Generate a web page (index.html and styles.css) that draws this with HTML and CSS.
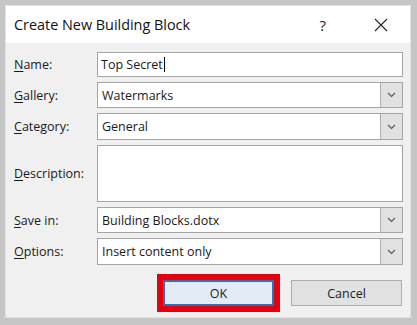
FILE: index.html
```html
<!DOCTYPE html>
<html lang="en">
<head>
    <meta charset="UTF-8">
    <title>Create New Building Block</title>
    <link rel="stylesheet" href="styles.css">
</head>
<body>
    <div class="dialog">
        <!-- Title bar -->
        <div class="titlebar">
            <span class="title">Create New Building Block</span>
            <span class="help">?</span>
            <svg class="close" width="14" height="14" viewBox="0 0 14 14">
                <path d="M1 1 L13 13 M13 1 L1 13" stroke="#222" stroke-width="1.1" fill="none"/>
            </svg>
        </div>

        <!-- Fields -->
        <div class="form">
            <label><u>N</u>ame:</label>
            <div class="field text">Top Secret<span class="caret"></span></div>

            <label><u>G</u>allery:</label>
            <div class="field select"><span class="value">Watermarks</span><span class="drop"><svg width="9" height="6" viewBox="0 0 9 6"><path d="M1 1 L4.5 4.5 L8 1" stroke="#555" stroke-width="1.1" fill="none"/></svg></span></div>

            <label><u>C</u>ategory:</label>
            <div class="field select"><span class="value">General</span><span class="drop"><svg width="9" height="6" viewBox="0 0 9 6"><path d="M1 1 L4.5 4.5 L8 1" stroke="#555" stroke-width="1.1" fill="none"/></svg></span></div>

            <label><u>D</u>escription:</label>
            <div class="field area"></div>

            <label><u>S</u>ave in:</label>
            <div class="field select"><span class="value">Building Blocks.dotx</span><span class="drop"><svg width="9" height="6" viewBox="0 0 9 6"><path d="M1 1 L4.5 4.5 L8 1" stroke="#555" stroke-width="1.1" fill="none"/></svg></span></div>

            <label><u>O</u>ptions:</label>
            <div class="field select"><span class="value">Insert content only</span><span class="drop"><svg width="9" height="6" viewBox="0 0 9 6"><path d="M1 1 L4.5 4.5 L8 1" stroke="#555" stroke-width="1.1" fill="none"/></svg></span></div>
        </div>

        <!-- Buttons -->
        <div class="buttons">
            <div class="highlight">
                <button type="button" class="btn default">OK</button>
            </div>
            <button type="button" class="btn">Cancel</button>
        </div>
    </div>
</body>
</html>
```

FILE: styles.css
```css
/* General */
body {
    margin: 0;
    padding: 5px 6px 7px 5px;
    background-color: #c6c6c6;
    font-family: 'Open Sans', 'Noto Sans', sans-serif;
    font-size: 12.5px;
    color: #1a1a1a;
}

.dialog {
    width: 404px;
    height: 311px;
    background-color: #f0f0f0;
    border: 1px solid #e2e2e2;
    display: flex;
    flex-direction: column;
}

/* Title bar */
.titlebar {
    height: 37px;
    background-color: #ffffff;
    display: flex;
    align-items: center;
    padding-left: 8px;
}

.title {
    font-size: 14.4px;
    flex: 1;
    color: #111;
}

.help {
    font-size: 15px;
    margin-right: 48px;
    color: #222;
}

.close {
    margin-right: 22px;
}

/* Form */
.form {
    display: grid;
    grid-template-columns: 83px 1fr;
    grid-template-rows: 25px 26px 27px 57px 26px 27px;
    row-gap: 5px;
    padding: 9px 7px 0 8px;
}

.form label {
    display: flex;
    align-items: center;
}

.form label u {
    text-decoration-thickness: 1px;
    text-underline-offset: 2px;
}

.field {
    background-color: #ffffff;
    border: 1px solid #a5a5a5;
    display: flex;
    align-items: center;
}

.text {
    padding-left: 3px;
}

.caret {
    display: inline-block;
    width: 1px;
    height: 15px;
    background-color: #000;
    margin-left: 1px;
}

.select .value {
    flex: 1;
    padding-left: 4px;
}

.select .drop {
    width: 21px;
    height: 100%;
    background-color: #e1e1e1;
    border-left: 1px solid #adadad;
    display: flex;
    align-items: center;
    justify-content: center;
}

/* Buttons */
.buttons {
    display: flex;
    align-items: center;
    padding: 9px 0 0 151px;
}

.highlight {
    border: 6px solid #e3000f;
    display: flex;
}

.btn {
    width: 111px;
    height: 26px;
    font-family: inherit;
    font-size: 12.5px;
    color: #1a1a1a;
    background-color: #e1e1e1;
    border: 1px solid #adadad;
    padding: 0;
}

.btn.default {
    border: 2px solid #3a6db0;
    background-color: #e3ecf6;
}

.buttons > .btn {
    margin-left: 11px;
}
```
